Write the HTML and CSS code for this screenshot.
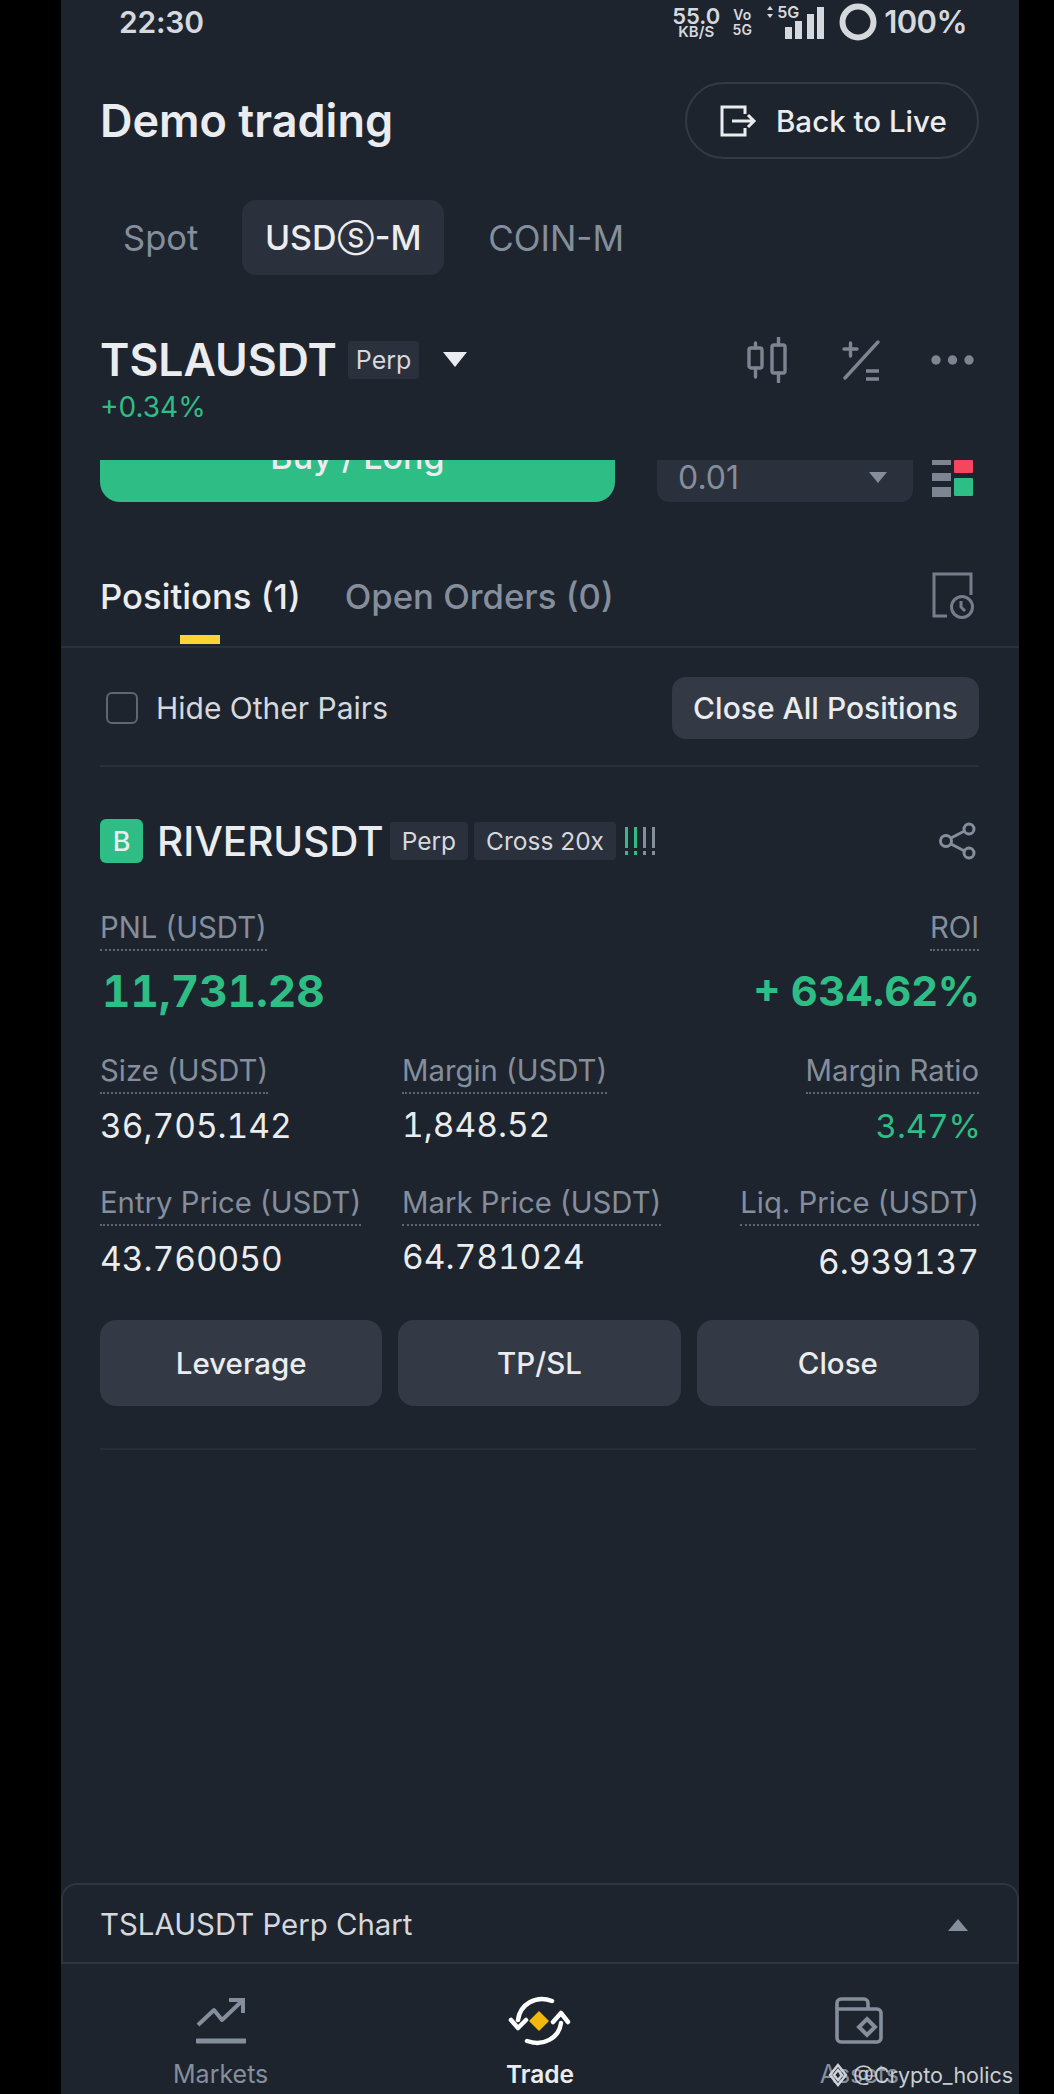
FILE: index.html
```html
<!DOCTYPE html>
<html lang="en">
<head>
<meta charset="utf-8">
<title>Demo trading</title>
<link rel="stylesheet" href="styles.css">
</head>
<body>
<main class="app">
  <div class="status">
    <span class="time">22:30</span>
    <div class="status-right">
      <div class="net"><span class="net-a">55.0</span><span class="net-b">KB/S</span></div>
      <div class="vo"><span>Vo</span><span>5G</span></div>
      <svg class="signal" width="60" height="34" viewBox="0 0 60 34"><path d="M3 5l3-4 3 4zM3 9l3 4 3-4z" fill="#d5d8dd"/><rect x="21" y="22" width="7" height="12" fill="#d5d8dd"/><rect x="31" y="16" width="7" height="18" fill="#d5d8dd"/><rect x="43" y="9" width="7" height="25" fill="#d5d8dd"/><rect x="53" y="2" width="7" height="32" fill="#d5d8dd"/></svg>
      <span class="five">5G</span>
      <svg class="ring" width="38" height="38" viewBox="0 0 38 38"><circle cx="19" cy="19" r="15.5" fill="none" stroke="#d5d8dd" stroke-width="6"/></svg>
      <span class="batt">100%</span>
    </div>
  </div>

  <header class="head">
    <h1 class="title">Demo trading</h1>
    <button class="live">
      <svg width="37" height="32" viewBox="0 0 37 32" fill="none" stroke="#eaecef" stroke-width="3"><path d="M25 9V2H2v28h23v-7"/><path d="M12 16h22M28 10l6 6-6 6"/></svg>
      <span>Back to Live</span>
    </button>
  </header>

  <nav class="market-tabs">
    <span class="mtab mtab-spot">Spot</span>
    <span class="mtab mtab-on">USD<span class="sc">Ⓢ</span>-M</span>
    <span class="mtab mtab-coin">COIN-M</span>
  </nav>

  <section class="symbol">
    <div class="sym-left">
      <span class="sym-name">TSLAUSDT</span>
      <span class="tag tag-top">Perp</span>
      <svg class="caret" width="24" height="15" viewBox="0 0 24 15"><path d="M0 0h24L12 15z" fill="#eaecef"/></svg>
    </div>
    <div class="sym-icons">
      <svg class="ic-candle" width="40" height="46" viewBox="0 0 40 46" fill="none" stroke="#7d8592" stroke-width="3.4" stroke-linecap="round"><rect x="2" y="11" width="13" height="20" rx="2"/><path d="M8.500 6v5M8.500 31v9"/><rect x="25" y="8" width="13" height="28" rx="2"/><path d="M31.500 1v7M31.500 36v9"/></svg>
      <svg class="ic-calc" width="38" height="42" viewBox="0 0 38 42" fill="none" stroke="#7d8592" stroke-width="3.400" stroke-linecap="round"><path d="M2 10h13M8.500 4v13M36 3L3 39"/><path d="M24 32h13M24 40h13" stroke-linecap="butt"/></svg>
      <svg width="43" height="10" viewBox="0 0 43 10" fill="#7d8592"><circle cx="5" cy="5" r="4.700"/><circle cx="21.500" cy="5" r="4.700"/><circle cx="38" cy="5" r="4.700"/></svg>
    </div>
  </section>
  <div class="change">+0.34%</div>

  <section class="order">
    <div class="buy-clip"><div class="buy">Buy / Long</div></div>
    <div class="qty"><span>0.01</span><svg width="18" height="11" viewBox="0 0 18 11"><path d="M0 0h18L9 11z" fill="#848e9c"/></svg></div>
    <div class="depth">
      <div class="depth-col"><i class="d1"></i><i class="d2"></i><i class="d3"></i></div>
      <div class="depth-col"><i class="d-red"></i><i class="d-green"></i></div>
    </div>
  </section>

  <section class="pos-tabs">
    <span class="ptab ptab-on">Positions (1)</span>
    <span class="ptab">Open Orders (0)</span>
    <svg class="hist" width="44" height="48" viewBox="0 0 44 48" fill="none" stroke="#767e8b" stroke-width="3"><path d="M15 44H2V2h37v21"/><circle cx="30" cy="35" r="10.500"/><path d="M29 29v6l4 4"/></svg>
  </section>

  <section class="filter">
    <label class="hide"><i class="check"></i><span>Hide Other Pairs</span></label>
    <button class="close-all">Close All Positions</button>
  </section>
  <hr class="rule">

  <section class="pos-head">
    <span class="side">B</span>
    <span class="pos-name">RIVERUSDT</span>
    <span class="tag tag-sm">Perp</span>
    <span class="tag tag-sm">Cross 20x</span>
    <span class="risk"><i class="on"></i><i class="on"></i><i></i><i></i></span>
    <svg class="share" width="38" height="38" viewBox="0 0 38 38" fill="none" stroke="#848e9c" stroke-width="3"><circle cx="30" cy="7" r="5"/><circle cx="7" cy="19" r="5.500"/><circle cx="30" cy="31" r="5"/><path d="M12 16l13.500-7M12 22l13.500 7"/></svg>
  </section>

  <section class="pnl">
    <div><span class="lbl">PNL (USDT)</span><div class="big big-pnl">11,731.28</div></div>
    <div class="right"><span class="lbl">ROI</span><div class="big big-roi">+ 634.62%</div></div>
  </section>

  <section class="metrics">
    <div><span class="lbl">Size (USDT)</span><div class="val">36,705.142</div></div>
    <div><span class="lbl">Margin (USDT)</span><div class="val up-1">1,848.52</div></div>
    <div class="right"><span class="lbl">Margin Ratio</span><div class="val green">3.47%</div></div>
  </section>
  <section class="metrics metrics-b">
    <div><span class="lbl">Entry Price (USDT)</span><div class="val">43.760050</div></div>
    <div><span class="lbl">Mark Price (USDT)</span><div class="val up-2">64.781024</div></div>
    <div class="right"><span class="lbl">Liq. Price (USDT)</span><div class="val down-3">6.939137</div></div>
  </section>

  <section class="actions">
    <button class="act">Leverage</button>
    <button class="act">TP/SL</button>
    <button class="act">Close</button>
  </section>
  <hr class="rule rule-dim">

  <div class="spacer"></div>

  <section class="chart-bar">
    <span>TSLAUSDT Perp Chart</span>
    <svg width="20" height="12" viewBox="0 0 20 12"><path d="M10 0l10 12H0z" fill="#848e9c"/></svg>
  </section>

  <nav class="bottom">
    <div class="nav-item">
      <svg class="nav-icon" width="50" height="48" viewBox="0 0 50 48" fill="none" stroke="#848e9c" stroke-width="4"><path d="M2 28l16-15 8 10L46 4" stroke-linejoin="round"/><path d="M33 3h14v13"/><path d="M1 44h48" stroke-width="5" stroke-linecap="round"/></svg>
      <span>Markets</span>
    </div>
    <div class="nav-item nav-on">
      <svg class="nav-icon" width="63" height="50" viewBox="0 0 63 50" fill="none" stroke="#fff" stroke-width="4.500" stroke-linecap="round" stroke-linejoin="round"><path d="M10 24C12 8 28-1 44 5"/><path d="M53 27C51 42 35 51 19 45"/><path d="M3 24l7 8 8-8M45 26l8-9 7 9"/><path d="M31 15l10 10-10 10-10-10z" fill="#f0b90b" stroke="none"/></svg>
      <span>Trade</span>
    </div>
    <div class="nav-item">
      <svg class="nav-icon" width="50" height="48" viewBox="0 0 50 48" fill="none" stroke="#848e9c" stroke-width="3.600"><path d="M3 12V6a4 4 0 0 1 4-4h23a4 4 0 0 1 4 4v6"/><path d="M3 12h40a4 4 0 0 1 4 4v25a4 4 0 0 1-4 4H7a4 4 0 0 1-4-4z"/><path d="M33 22l8 8-8 8-8-8z" stroke-width="4"/></svg>
      <span>Assets</span>
    </div>
  </nav>

  <div class="watermark">
    <svg width="20" height="24" viewBox="0 0 20 24" fill="none" stroke="#d0d3d8" stroke-width="2.400"><path d="M10 2l8 10-8 10-8-10zM6 12l4-5 4 5-4 5z"/></svg>
    <span>@Crypto_holics</span>
  </div>
</main>
</body>
</html>
```
FILE: styles.css
```css
* { box-sizing: border-box; }
html, body { margin: 0; padding: 0; background: #000; }
body { height: 2094px; overflow: hidden; font-family: "Inter", "DejaVu Sans", sans-serif; }
button { font-family: inherit; border: 0; cursor: pointer; }
i { display: block; }

.app {
  position: relative;
  width: 958px;
  height: 2094px;
  margin-left: 61px;
  display: flex;
  flex-direction: column;
  background: #1e242e;
  color: #eaecef;
  overflow: hidden;
}

/* status bar */
.status { height: 44px; padding: 0 52px 0 58px; display: flex; align-items: center; justify-content: space-between; color: #d5d8dd; }
.time { font-size: 30px; font-weight: 600; letter-spacing: -.2px; }
.status-right { position: relative; display: flex; align-items: center; font-weight: 600; }
.net { display: flex; flex-direction: column; align-items: center; width: 50px; line-height: 1; }
.net-a { font-size: 22px; height: 19px; }
.net-b { font-size: 15px; }
.vo { display: flex; flex-direction: column; align-items: center; margin-left: 13px; width: 16px; font-size: 14px; line-height: 15px; }
.signal { margin-left: 14px; }
.five { position: absolute; left: 106px; top: 0; font-size: 16px; line-height: 18px; }
.ring { margin-left: 15px; }
.batt { margin-left: 7px; font-size: 31px; font-weight: 600; line-height: 36px; letter-spacing: -.6px; }

/* header */
.head { margin-top: 38px; height: 77px; padding: 0 40px 0 39px; display: flex; align-items: center; justify-content: space-between; }
.title { margin: 0; font-size: 45px; font-weight: 600; color: #eaecef; }
.live { width: 294px; height: 77px; border: 2px solid #333a45; border-radius: 39px; background: transparent; color: #eaecef; display: flex; align-items: center; padding: 0 0 0 33px; gap: 19px; font-size: 29.500px; font-weight: 500; }

.market-tabs { margin-top: 41px; height: 75px; padding-left: 39px; display: flex; align-items: center; }
.mtab { height: 75px; display: flex; align-items: center; font-size: 35px; color: #848e9c; }
.mtab-spot { padding: 0 44px 0 23px; font-size: 34.500px; }
.mtab-on { width: 202px; justify-content: center; background: #2b313c; border-radius: 14px; color: #eaecef; font-weight: 500; font-size: 34px; }
.mtab-coin { padding-left: 44px; }
.sc { font-size: 26px; margin: 0 1px; }

/* symbol */
.symbol { margin-top: 66px; height: 37px; padding: 0 45px 0 39px; display: flex; align-items: center; justify-content: space-between; }
.sym-left { display: flex; align-items: center; }
.sym-name { font-size: 44.500px; font-weight: 600; color: #eaecef; }
.tag { height: 38px; padding: 0 13px; display: flex; align-items: center; background: #2b313c; border-radius: 4px; font-size: 25px; color: #d5d8dd; margin-left: 6px; }
.tag-top { margin-left: 11px; padding: 0 8px; }
.caret { margin-left: 24px; }
.sym-icons { display: flex; align-items: center; }
.ic-calc { margin: 0 51px 0 55px; }
.change { margin-top: 16px; padding-left: 39px; height: 26px; line-height: 26px; font-size: 28px; color: #2ebd85; }

/* order row */
.order { margin-top: 40px; height: 42px; padding-left: 39px; display: flex; }
.buy-clip { width: 515px; height: 42px; overflow: hidden; border-radius: 0 0 20px 20px; background: #2ebd85; }
.buy { margin-top: -24px; height: 42px; line-height: 42px; text-align: center; color: #eaecef; font-size: 34px; font-weight: 500; }
.qty { margin-left: 42px; width: 256px; height: 42px; background: #2b313c; border-radius: 0 0 12px 12px; padding: 0 26px 8px 21px; display: flex; align-items: center; justify-content: space-between; font-size: 32px; color: #848e9c; }
.depth { margin-left: 19px; display: flex; gap: 3px; }
.depth-col { display: flex; flex-direction: column; width: 19px; }
.d1 { height: 5px; background: #7d8592; }
.d2 { height: 8px; margin-top: 8px; background: #7d8592; }
.d3 { height: 10px; margin-top: 6px; background: #7d8592; }
.d-red { height: 13px; background: #f6465d; border-radius: 1px; }
.d-green { height: 18px; margin-top: 5px; background: #2ebd85; border-radius: 1px; }

/* positions tabs */
.pos-tabs { margin-top: 60px; height: 86px; padding: 0 43px 16px 39px; border-bottom: 2px solid #2b313c; display: flex; align-items: center; }
.ptab { position: relative; font-size: 34.700px; font-weight: 500; color: #848e9c; margin-right: 44px; }
.ptab-on { color: #eaecef; }
.ptab-on::after { content: ""; position: absolute; left: 80px; bottom: -27px; width: 40px; height: 9px; background: #fcd535; }
.hist { margin-left: auto; }

.filter { margin-top: 29px; height: 62px; padding: 0 40px 0 45px; display: flex; align-items: center; justify-content: space-between; }
.hide { display: flex; align-items: center; gap: 18px; font-size: 30px; color: #d5d8dd; }
.check { width: 32px; height: 32px; border: 2.500px solid #5e6673; border-radius: 6px; }
.close-all { width: 307px; height: 62px; background: #333a45; border-radius: 14px; color: #eaecef; font-size: 30px; font-weight: 500; }

.rule { margin: 26px 40px 0 39px; height: 2px; border: 0; background: #2b313c; }
.rule-dim { margin-top: 42px; margin-right: 43px; background: #282e38; }

/* position card */
.pos-head { margin-top: 52px; height: 44px; padding: 0 42px 0 39px; display: flex; align-items: center; }
.side { width: 43px; height: 44px; background: #2ebd85; border-radius: 6px; display: flex; align-items: center; justify-content: center; color: #eaecef; font-size: 27px; font-weight: 500; }
.pos-name { margin-left: 14px; font-size: 40.400px; font-weight: 500; color: #eaecef; }
.tag-sm { font-size: 24.500px; padding: 0 12px; }
.risk { margin-left: 9px; display: flex; gap: 6px; height: 28px; }
.risk i { width: 3px; background: linear-gradient(#848e9c 74%, transparent 74%, transparent 84%, #848e9c 84%); }
.risk i.on { background: linear-gradient(#2ebd85 74%, transparent 74%, transparent 84%, #2ebd85 84%); }
.share { margin-left: auto; }

.lbl { display: block; width: fit-content; height: 39px; line-height: 32px; border-bottom: 2px dotted #5e6673; font-size: 29.300px; color: #848e9c; }
.right { text-align: right; }
.right .lbl { margin-left: auto; }
.pnl { margin-top: 49px; padding: 0 40px 0 39px; display: flex; justify-content: space-between; }
.big { margin-top: 15px; height: 50px; line-height: 50px; font-size: 42px; font-weight: 700; color: #2ebd85; }
.big-pnl { font-size: 44px; font-variant-numeric: tabular-nums; padding-left: 2px; }
.big-roi { font-size: 41.700px; margin-right: -1px; }
.metrics { margin-top: 39px; padding: 0 40px 0 39px; display: grid; grid-template-columns: 302px 1fr auto; }
.val { margin-top: 10px; height: 44px; line-height: 44px; font-size: 33.500px; font-variant-numeric: tabular-nums; color: #eaecef; }
.green { color: #2ebd85; font-size: 33px; margin-right: -2px; }
.up-1 { margin-top: 9px; }
.metrics-b .val { margin-top: 11px; }
.metrics-b .up-2 { margin-top: 9px; }
.metrics-b .down-3 { margin-top: 14px; }

.actions { margin-top: 36px; padding: 0 40px 0 39px; display: grid; grid-template-columns: repeat(3, 1fr); gap: 16px; }
.act { height: 86px; background: #333a45; border-radius: 16px; color: #eaecef; font-size: 29.500px; font-weight: 500; }

.spacer { flex: 1; }

.chart-bar { height: 81px; border: 2px solid #2f3641; border-radius: 16px 16px 0 0; padding: 2px 49px 0 37px; display: flex; align-items: center; justify-content: space-between; font-size: 29.400px; color: #d5d8dd; }
.bottom { height: 130px; display: grid; grid-template-columns: repeat(3, 1fr); }
.nav-item { display: flex; flex-direction: column; align-items: center; padding-top: 32px; font-size: 25px; color: #848e9c; }
.nav-icon { height: 50px; }
.nav-item span { margin-top: 11px; line-height: 34px; }
.nav-on { color: #eaecef; font-weight: 600; font-size: 24.500px; }

.watermark { position: absolute; left: 767px; bottom: 2px; height: 34px; display: flex; align-items: center; gap: 5px; font-size: 21.500px; color: #c9ccd1; }
```
